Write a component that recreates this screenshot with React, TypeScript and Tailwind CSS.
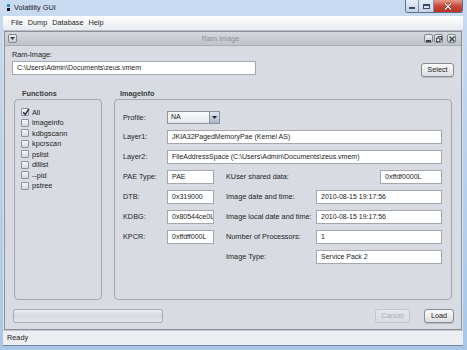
import React from 'react';

const labels = 'text-[7.3px] text-[#1e1e1e] leading-none';

const Field: React.FC<{ className?: string; children?: React.ReactNode }> = ({ className = '', children }) => (
  <div className={`h-[14px] bg-white border border-[#a4a8ae] flex items-center px-[4px] text-[7px] text-[#1a1a1a] whitespace-nowrap overflow-hidden ${className}`}>
    {children}
  </div>
);

const Button: React.FC<{ className?: string; disabled?: boolean; children: React.ReactNode }> = ({ className = '', disabled, children }) => (
  <div
    className={`h-[14px] rounded-[3px] border flex items-center justify-center text-[7.3px] ${
      disabled
        ? 'border-[#c2c5ca] bg-linear-to-b from-[#e4e6ea] to-[#d9dce1] text-[#a9adb2]'
        : 'border-[#878c93] bg-linear-to-b from-[#fbfbfc] to-[#dadde2] text-[#1e1e1e] shadow-[0_1px_0_#b9bdc3]'
    } ${className}`}
  >
    {children}
  </div>
);

const Check: React.FC<{ checked?: boolean; label: string }> = ({ checked, label }) => (
  <div className="h-[10.5px] flex items-center gap-[3px]">
    <div className="w-[8px] h-[8px] border border-[#8d9198] rounded-[1px] bg-linear-to-b from-[#f7f8f9] to-[#d3d6db] relative">
      {checked && (
        <svg viewBox="0 0 8 8" className="absolute -top-[1px] left-0 w-[8px] h-[8px]">
          <path d="M1.2 4.2 L3.2 6.4 L7 0.8" fill="none" stroke="#1a2a4a" strokeWidth="1.4" />
        </svg>
      )}
    </div>
    <span className={labels}>{label}</span>
  </div>
);

const Row: React.FC<{ label: string; children?: React.ReactNode; h?: string }> = ({ label, children, h = 'h-[14px]' }) => (
  <div className={`${h} flex items-center`}>
    <span className={`${labels} w-[44px]`}>{label}</span>
    {children}
  </div>
);

const FrameBtn: React.FC<{ children: React.ReactNode }> = ({ children }) => (
  <div className="w-[9px] h-[9px] rounded-[2px] border border-[#80868e] bg-linear-to-b from-[#eef0f2] to-[#c6cad0] flex items-center justify-center">
    {children}
  </div>
);

export default function App() {
  return (
    <div className="w-[467px] h-[350px] bg-linear-to-b from-[#c8dbf1] to-[#a9c6e7] flex flex-col font-['Liberation_Sans',Arial,sans-serif] overflow-hidden">
      {/* window title bar */}
      <div className="h-[16px] shrink-0 flex items-start">
        <div className="ml-[7px] mt-[4px] flex flex-col gap-[1px]">
          <div className="w-[3px] h-[3px] bg-[#2a8fb0]" />
          <div className="w-[3px] h-[3px] bg-[#111]" />
        </div>
        <span className="ml-[4px] mt-[4px] text-[7.3px] leading-none text-[#1c1c1c]">Volatility GUI</span>
        <div className="ml-auto mr-[4px] flex h-[13px] border border-t-0 border-[#5b6f8a] rounded-b-[3px] overflow-hidden">
          <div className="w-[13px] bg-linear-to-b from-[#e6eef8] to-[#c5d4e8] flex items-center justify-center border-r border-[#7f92ab]">
            <div className="w-[6px] h-[2px] bg-white border border-[#3c4a5c] mt-[3px]" />
          </div>
          <div className="w-[15px] bg-linear-to-b from-[#e6eef8] to-[#c5d4e8] flex items-center justify-center border-r border-[#7f92ab]">
            <div className="w-[7px] h-[5px] border border-[#3c4a5c] border-t-2 bg-[#dbe5f2]" />
          </div>
          <div className="w-[28px] bg-linear-to-b from-[#e49a8c] via-[#c9473a] to-[#b83124] flex items-center justify-center">
            <svg viewBox="0 0 8 7" className="w-[8px] h-[7px]">
              <path d="M1 0.5 L7 6.5 M7 0.5 L1 6.5" stroke="#4a1a14" strokeWidth="2.4" />
              <path d="M1 0.5 L7 6.5 M7 0.5 L1 6.5" stroke="#fff" strokeWidth="1.3" />
            </svg>
          </div>
        </div>
      </div>

      {/* client area */}
      <div className="flex-1 ml-[3px] mr-[4px] mb-[4px] flex flex-col bg-[#dfe2e7] border-b border-[#6f849e]">
        {/* menu bar */}
        <div className="h-[15px] shrink-0 flex items-center gap-[5px] pl-[8px] bg-linear-to-b from-[#ffffff] to-[#e8ebef] border-b border-[#b9bec6]">
          <span className={labels}>File</span>
          <span className={labels}>Dump</span>
          <span className={labels}>Database</span>
          <span className={labels}>Help</span>
        </div>

        {/* internal frame */}
        <div className="h-[299px] shrink-0 mx-[1px] flex flex-col border border-[#8b9098] bg-[#d8dbe1]">
          <div className="h-[14px] shrink-0 flex items-center px-[3px] bg-linear-to-b from-[#d5d8de] to-[#bfc3ca] border-b border-[#a9adb4] relative">
            <FrameBtn>
              <svg viewBox="0 0 5 3" className="w-[5px] h-[3px]">
                <path d="M0 0 L5 0 L2.5 3 Z" fill="#3a3f46" />
              </svg>
            </FrameBtn>
            <span className="flex-1 text-center text-[7.3px] leading-none text-[#8d9299]">Ram Image</span>
            <div className="flex gap-[1px] mr-[2px]">
              <FrameBtn>
                <div className="w-[5px] h-[2px] bg-[#3a3f46] mt-[4px]" />
              </FrameBtn>
              <FrameBtn>
                <svg viewBox="0 0 7 7" className="w-[6px] h-[6px]">
                  <rect x="2.5" y="0.5" width="4" height="4" fill="none" stroke="#3a3f46" />
                  <rect x="0.5" y="2.5" width="4" height="4" fill="#e4e6e9" stroke="#3a3f46" />
                </svg>
              </FrameBtn>
              <div className="w-[2px]" />
              <FrameBtn>
                <svg viewBox="0 0 6 6" className="w-[6px] h-[6px]">
                  <path d="M0.5 0.5 L5.5 5.5 M5.5 0.5 L0.5 5.5" stroke="#3a3f46" strokeWidth="1.3" />
                </svg>
              </FrameBtn>
            </div>
          </div>

          {/* frame content */}
          <div className="flex-1 flex flex-col pt-[4px] px-[7px]">
            <span className={`${labels} h-[10px] flex items-center`}>Ram-Image:</span>
            <div className="mt-[1px] h-[16px] flex items-start">
              <Field className="w-[244px]">C:\Users\Admin\Documents\zeus.vmem</Field>
              <Button className="ml-auto mt-[2px] w-[33px]">Select</Button>
            </div>

            <div className="mt-[12px] px-[2px] flex gap-[12px]">
              <div className="w-[88px] flex flex-col">
                <span className="h-[10px] ml-[8px] flex items-center text-[7.3px] font-bold text-[#3a3d42]">Functions</span>
                <div className="h-[201px] border border-[#a3a7ae] rounded-[4px] pt-[7px] pl-[6px] flex flex-col">
                  <Check checked label="All" />
                  <Check label="imageinfo" />
                  <Check label="kdbgscann" />
                  <Check label="kpcrscan" />
                  <Check label="pslist" />
                  <Check label="dlllist" />
                  <Check label="--pid" />
                  <Check label="pstree" />
                </div>
              </div>

              <div className="flex-1 flex flex-col">
                <span className="h-[10px] ml-[6px] flex items-center text-[7.3px] font-bold text-[#3a3d42]">ImageInfo</span>
                <div className="h-[201px] border border-[#a3a7ae] rounded-[4px] pt-[11px] pl-[8px] flex flex-col gap-[6px]">
                  <Row label="Profile:" h="h-[13px]">
                    <div className="w-[53px] h-[13px] border border-[#8f949b] bg-linear-to-b from-[#fbfcfd] to-[#e3e6ea] flex items-center">
                      <span className="flex-1 pl-[3px] text-[7px] text-[#1a1a1a]">NA</span>
                      <div className="w-[10px] h-full border-l border-[#8f949b] bg-linear-to-b from-[#dfe6ef] to-[#a9b6c7] flex items-center justify-center">
                        <svg viewBox="0 0 5 3" className="w-[5px] h-[3px]">
                          <path d="M0 0 L5 0 L2.5 3 Z" fill="#1f2530" />
                        </svg>
                      </div>
                    </div>
                  </Row>
                  <Row label="Layer1:">
                    <Field className="w-[275px]">JKIA32PagedMemoryPae (Kernel AS)</Field>
                  </Row>
                  <Row label="Layer2:">
                    <Field className="w-[275px]">FileAddressSpace (C:\Users\Admin\Documents\zeus.vmem)</Field>
                  </Row>
                  <Row label="PAE Type:">
                    <Field className="w-[47px]">PAE</Field>
                    <span className={`${labels} ml-[12px] w-[154px]`}>KUser shared data:</span>
                    <Field className="w-[62px]">0xffdf0000L</Field>
                  </Row>
                  <Row label="DTB:">
                    <Field className="w-[47px]">0x319000</Field>
                    <span className={`${labels} ml-[12px] w-[90px]`}>Image date and time:</span>
                    <Field className="w-[126px]">2010-08-15 19:17:56</Field>
                  </Row>
                  <Row label="KDBG:">
                    <Field className="w-[47px] px-[2px]">0x80544ce0L</Field>
                    <span className={`${labels} ml-[12px] w-[90px]`}>Image local date and time:</span>
                    <Field className="w-[126px]">2010-08-15 19:17:56</Field>
                  </Row>
                  <Row label="KPCR:">
                    <Field className="w-[47px] px-[2px]">0xffdff000L</Field>
                    <span className={`${labels} ml-[12px] w-[90px]`}>Number of Processors:</span>
                    <Field className="w-[126px]">1</Field>
                  </Row>
                  <Row label="">
                    <div className="w-[47px]" />
                    <span className={`${labels} ml-[12px] w-[90px]`}>Image Type:</span>
                    <Field className="w-[126px]">Service Pack 2</Field>
                  </Row>
                </div>
              </div>
            </div>

            <div className="mt-[9px] h-[14px] flex items-center">
              <div className="ml-[1px] w-[150px] h-[14px] rounded-[3px] border border-[#a7abb1] bg-linear-to-b from-[#eceef1] via-[#d5d8dd] to-[#e2e4e8]" />
              <Button disabled className="ml-auto w-[35px] h-[13px]">Cancel</Button>
              <Button className="ml-[14px] w-[30px]">Load</Button>
            </div>
          </div>
        </div>

        {/* status bar */}
        <div className="h-[15px] shrink-0 flex items-center pl-[4px] bg-[#eceef1] border-t border-[#c4c8ce]">
          <span className={labels}>Ready</span>
        </div>
      </div>
    </div>
  );
}
